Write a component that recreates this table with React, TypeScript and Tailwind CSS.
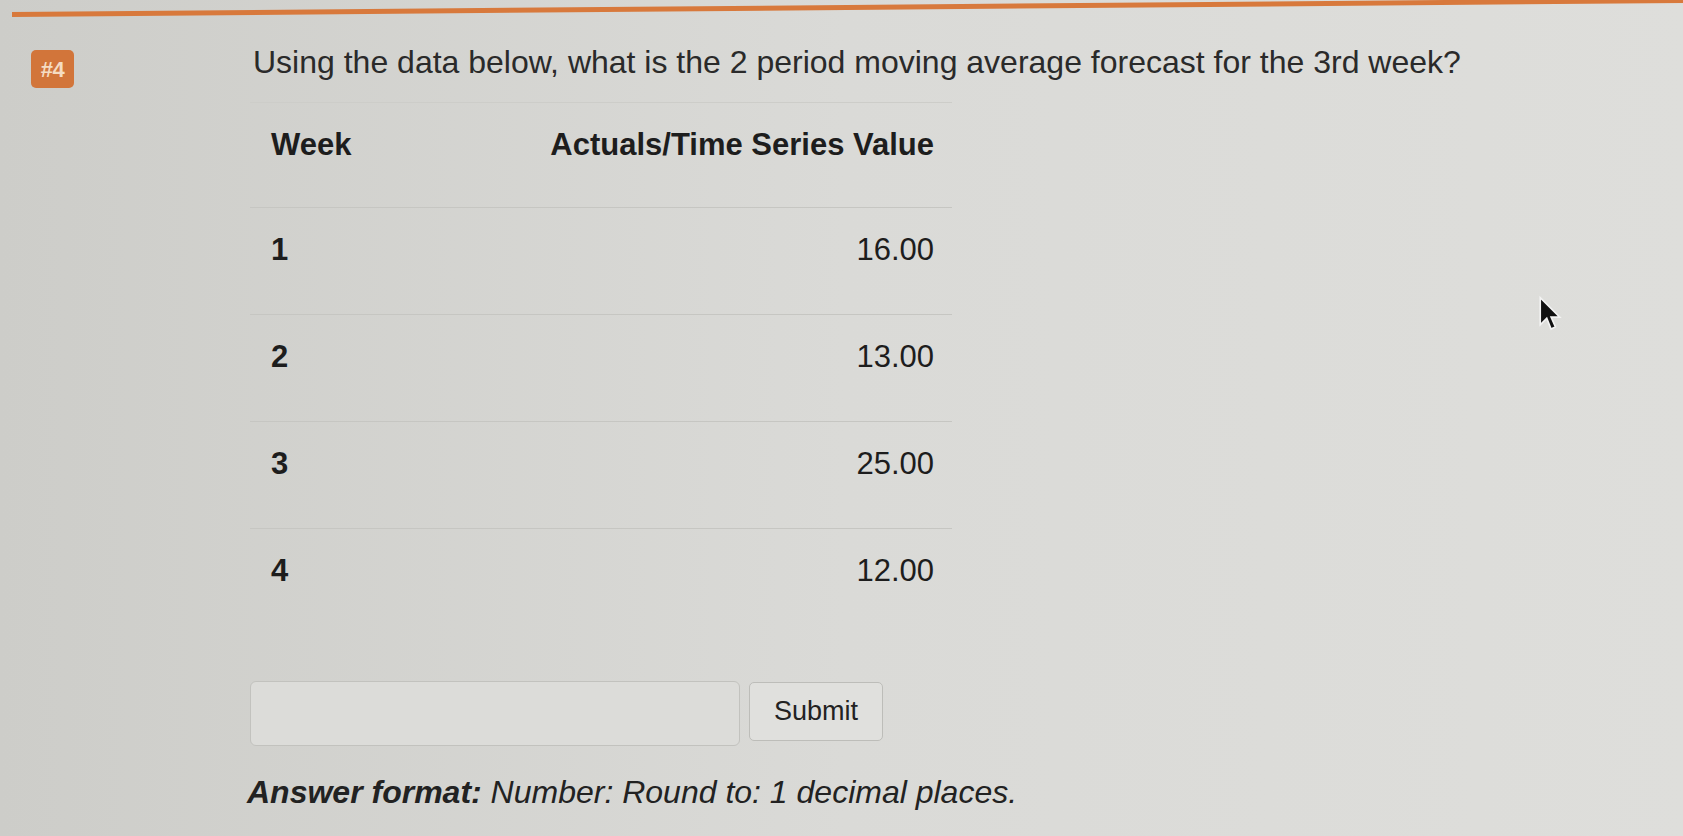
import React from "react";

const rows = [
  { week: "1", value: "16.00" },
  { week: "2", value: "13.00" },
  { week: "3", value: "25.00" },
  { week: "4", value: "12.00" },
];

const Cursor = () => (
  <svg width="26" height="40" viewBox="0 0 24 36" className="absolute left-[1537px] top-[295px]">
    <path d="M3 2 L3 27 L9 21 L13 31 L17 29 L13 20 L21 20 Z" fill="#111" stroke="#f4f4f4" strokeWidth="1.5" />
  </svg>
);

export default function App() {
  return (
    <div
      className="relative w-full h-[836px] overflow-hidden bg-gradient-to-r from-[#cdcdc9] via-[#dadad7] to-[#dededb] text-[#1d1d1d]"
      style={{ fontFamily: '"Liberation Sans", Arial, sans-serif' }}
    >
      {/* orange bar, slightly tilted like the photo */}
      <div className="pt-[12px] pl-[12px]">
        <div className="h-[5px] w-[1700px] bg-[#d8793c] origin-left -rotate-[0.48deg]" />
      </div>

      <div className="flex pt-[27px]">
        <div className="ml-[31px] mt-[6px] w-[43px] h-[38px] rounded-[5px] bg-[#d2753a] flex items-center justify-center text-[#f5dcc2] font-bold text-[22px] tracking-tight">
          #4
        </div>

        <div className="ml-[176px] flex flex-col">
          <p className="ml-[3px] text-[32px] leading-[36px] text-[#2a2a2a]">
            Using the data below, what is the 2 period moving average forecast for the 3rd week?
          </p>

          <table className="mt-[22px] w-[702px] border-t border-[#cdcdc9] text-[31px] leading-[36px]">
            <thead>
              <tr className="h-[105px] border-b border-[#c6c6c2]">
                <th className="align-top pt-[24px] pl-[21px] text-left font-bold">Week</th>
                <th className="align-top pt-[24px] pr-[18px] text-right font-bold">Actuals/Time Series Value</th>
              </tr>
            </thead>
            <tbody>
              {rows.map((r, i) => (
                <tr key={r.week} className={i < 3 ? "h-[107px] border-b border-[#c6c6c2]" : "h-[107px]"}>
                  <td className="align-top pt-[24px] pl-[21px] font-bold">{r.week}</td>
                  <td className="align-top pt-[24px] pr-[18px] text-right">{r.value}</td>
                </tr>
              ))}
            </tbody>
          </table>

          <div className="mt-[45px] flex items-center gap-[9px]">
            <div className="w-[490px] h-[65px] rounded-[6px] border border-[#c2c2be] bg-[#dcdcd9]" />
            <button className="-mt-[4px] w-[134px] h-[59px] rounded-[5px] border border-[#bdbdb9] bg-[#e0e0dd] text-[27px] text-[#222]">
              Submit
            </button>
          </div>

          <p className="mt-[28px] -ml-[3px] italic text-[32px] leading-[36px] text-[#222]">
            <span className="font-bold">Answer format:</span> Number: Round to: 1 decimal places.
          </p>
        </div>
      </div>

      <Cursor />
    </div>
  );
}
